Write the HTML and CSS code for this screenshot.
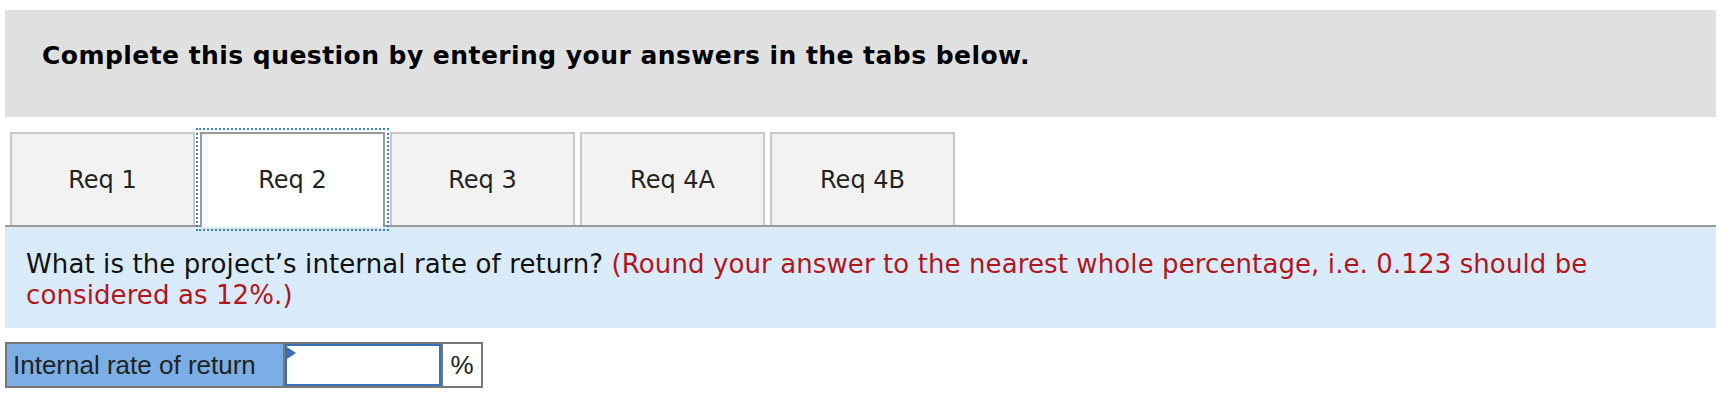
FILE: index.html
```html
<!DOCTYPE html>
<html lang="en">
<head>
<meta charset="UTF-8">
<meta name="viewport" content="width=device-width, initial-scale=1.0">
<title>Question tabs</title>
<link rel="stylesheet" href="styles.css">
</head>
<body>
<div class="header">
  <h2>Complete this question by entering your answers in the tabs below.</h2>
</div>

<div class="tabs">
  <button class="tab">Req 1</button>
  <button class="tab active">Req 2</button>
  <button class="tab">Req 3</button>
  <button class="tab">Req 4A</button>
  <button class="tab">Req 4B</button>
</div>

<div class="question">
  What is the project’s internal rate of return? <span class="hint">(Round your answer to the nearest whole percentage, i.e. 0.123 should be</span> <span class="hint">considered as 12%.)</span>
</div>

<div class="answer-row">
  <div class="answer-label">Internal rate of return</div>
  <div class="answer-cell">
    <span class="marker"></span>
    <input type="text" class="answer-input">
  </div>
  <div class="answer-unit">%</div>
</div>
</body>
</html>
```

FILE: styles.css
```css
body {
  margin: 10px 7px 0 5px;
  padding: 0;
  font-family: "DejaVu Sans", Verdana, sans-serif;
  background: #ffffff;
}

.header {
  background-color: #e0e0e0;
  height: 107px;
  display: flex;
  align-items: center;
  padding-left: 37px;
}

.header h2 {
  margin: 0;
  font-size: 25px;
  letter-spacing: 0.45px;
  font-weight: bold;
  color: #000000;
  padding-bottom: 17px;
}

.tabs {
  display: flex;
  gap: 5px;
  padding-left: 5px;
  margin-top: 15px;
  border-bottom: 2px solid #999999;
}

.tab {
  width: 185px;
  height: 93px;
  box-sizing: border-box;
  background-color: #f2f2f2;
  border: 2px solid #c8c8c8;
  border-bottom: none;
  font-family: "DejaVu Sans", Verdana, sans-serif;
  font-size: 24px;
  color: #222222;
  padding: 0;
  margin: 0;
  cursor: pointer;
}

.tab.active {
  background-color: #ffffff;
  border-color: #999999;
  height: 95px;
  padding-bottom: 2px;
  margin-bottom: -2px;
  outline: 2px dotted #3d7fd1;
  outline-offset: 2px;
}

.question {
  background-color: #d9ebf9;
  padding: 22px 40px 17px 21px;
  font-size: 26px;
  letter-spacing: 0.1px;
  line-height: 31px;
  color: #111111;
}

.hint {
  color: #b0161e;
}

.answer-row {
  display: inline-flex;
  margin-top: 14px;
  border: 2px solid #777777;
  height: 46px;
  box-sizing: border-box;
  font-family: "Liberation Sans", Arial, sans-serif;
}

.answer-label {
  width: 270px;
  background-color: #7aaee4;
  color: #222222;
  font-size: 26px;
  padding-left: 6px;
  display: flex;
  align-items: center;
  border-right: 2px solid #777777;
}

.answer-cell {
  position: relative;
  border-right: 2px solid #777777;
}

.answer-input {
  width: 156px;
  height: 42px;
  box-sizing: border-box;
  border: 2px solid #3a70b6;
  margin: 0;
  padding: 0 6px;
  font-size: 22px;
  display: block;
}

.marker {
  position: absolute;
  top: 3px;
  left: 2px;
  width: 0;
  height: 0;
  border-top: 6px solid transparent;
  border-bottom: 6px solid transparent;
  border-left: 9px solid #3a70b6;
}

.answer-unit {
  width: 38px;
  display: flex;
  align-items: center;
  justify-content: center;
  font-size: 26px;
  color: #222222;
  background: #ffffff;
}
```
